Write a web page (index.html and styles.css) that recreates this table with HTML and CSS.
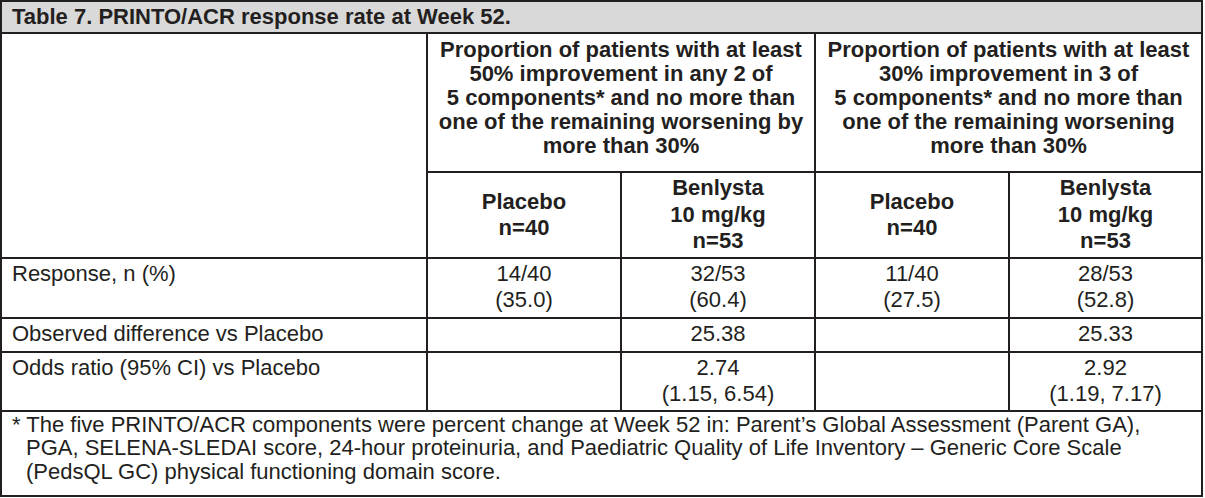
FILE: index.html
```html
<!DOCTYPE html>
<html>
<head>
<meta charset="utf-8">
<link rel="stylesheet" href="styles.css">
</head>
<body>
<div class="tbl" role="table">
  <div class="cell title">Table 7. PRINTO/ACR response rate at Week 52.</div>

  <div class="cell corner"></div>
  <div class="cell group">Proportion of patients with at least<br>50% improvement in any 2 of<br>5 components* and no more than<br>one of the remaining worsening by<br>more than 30%</div>
  <div class="cell group">Proportion of patients with at least<br>30% improvement in 3 of<br>5 components* and no more than<br>one of the remaining worsening<br>more than 30%</div>

  <div class="cell arm">Placebo<br>n=40</div>
  <div class="cell arm">Benlysta<br>10 mg/kg<br>n=53</div>
  <div class="cell arm">Placebo<br>n=40</div>
  <div class="cell arm">Benlysta<br>10 mg/kg<br>n=53</div>

  <div class="cell lbl">Response, n (%)</div>
  <div class="cell num">14/40<br>(35.0)</div>
  <div class="cell num">32/53<br>(60.4)</div>
  <div class="cell num">11/40<br>(27.5)</div>
  <div class="cell num">28/53<br>(52.8)</div>

  <div class="cell lbl">Observed difference vs Placebo</div>
  <div class="cell num"></div>
  <div class="cell num">25.38</div>
  <div class="cell num"></div>
  <div class="cell num">25.33</div>

  <div class="cell lbl">Odds ratio (95% CI) vs Placebo</div>
  <div class="cell num"></div>
  <div class="cell num">2.74<br>(1.15, 6.54)</div>
  <div class="cell num"></div>
  <div class="cell num">2.92<br>(1.19, 7.17)</div>

  <div class="cell foot">* The five PRINTO/ACR components were percent change at Week 52 in: Parent’s Global Assessment (Parent GA), PGA, SELENA-SLEDAI score, 24-hour proteinuria, and Paediatric Quality of Life Inventory – Generic Core Scale (PedsQL GC) physical functioning domain score.</div>
</div>
</body>
</html>
```

FILE: styles.css
```css
html, body {
  margin: 0;
  padding: 0;
  background: #ffffff;
}
.tbl {
  display: grid;
  grid-template-columns: 424px 192px 192px 192px 191px;
  grid-template-rows: 30px 137px 84px 58px 32px 57px 83px;
  gap: 2px;
  padding: 2px;
  width: 1203px;
  box-sizing: border-box;
  background: #231f20;
  font-family: "Liberation Sans", Arial, Helvetica, sans-serif;
  font-size: 22px;
  color: #231f20;
}
.cell {
  background: #ffffff;
  min-width: 0;
}
.title {
  grid-column: 1 / -1;
  background: #d9d9d9;
  font-weight: bold;
  line-height: 30px;
  padding-left: 10px;
}
.corner {
  grid-row: span 2;
}
.group {
  grid-column: span 2;
  font-weight: bold;
  text-align: center;
  line-height: 24px;
  padding-top: 4px;
}
.arm {
  display: flex;
  flex-direction: column;
  justify-content: center;
  font-weight: bold;
  text-align: center;
  line-height: 26.5px;
}
.lbl {
  line-height: 26px;
  padding: 2px 0 0 10px;
}
.num {
  line-height: 26px;
  padding-top: 2px;
  text-align: center;
}
.foot {
  grid-column: 1 / -1;
  line-height: 23.3px;
  padding: 1px 26px 0 24px;
  text-indent: -14px;
}
```
